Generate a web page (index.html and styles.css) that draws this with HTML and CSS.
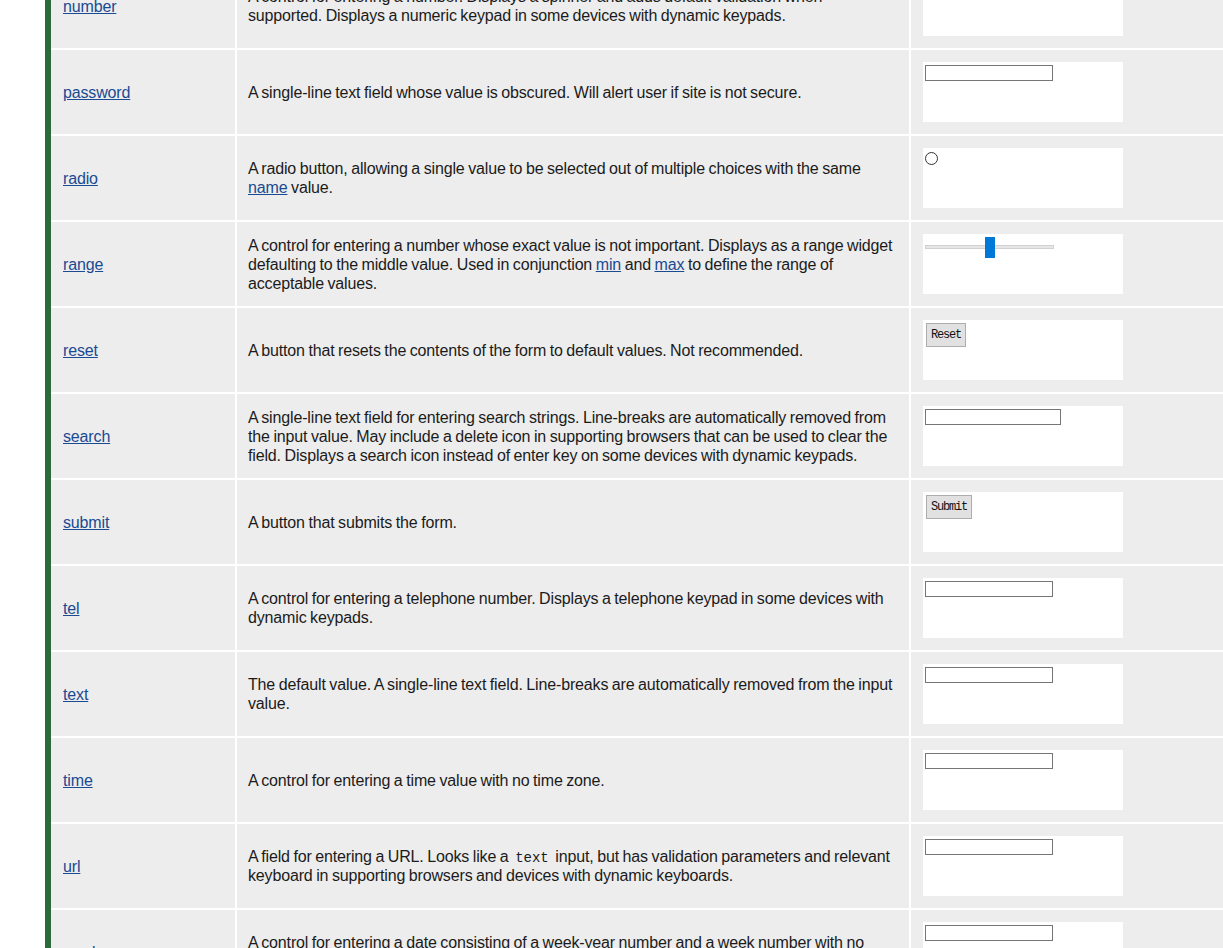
FILE: index.html
```html
<!DOCTYPE html>
<html lang="en">
<head>
    <meta charset="UTF-8">
    <meta name="viewport" content="width=device-width, initial-scale=1.0">
    <title>input types</title>
    <link rel="stylesheet" href="styles.css">
</head>
<body>
    <div class="table-wrap">
        <table class="types">
            <tbody>
                <tr>
                    <td class="type"><a href="#">number</a></td>
                    <td class="desc">A control for entering a number. Displays a spinner and adds default validation when supported. Displays a numeric keypad in some devices with dynamic keypads.</td>
                    <td class="demo"><div class="frame"><input type="text" class="field"></div></td>
                </tr>
                <tr>
                    <td class="type"><a href="#">password</a></td>
                    <td class="desc">A single-line text field whose value is obscured. Will alert user if site is not secure.</td>
                    <td class="demo"><div class="frame"><input type="password" class="field"></div></td>
                </tr>
                <tr>
                    <td class="type"><a href="#">radio</a></td>
                    <td class="desc">A radio button, allowing a single value to be selected out of multiple choices with the same <a href="#">name</a> value.</td>
                    <td class="demo"><div class="frame"><input type="radio" class="radio"></div></td>
                </tr>
                <tr>
                    <td class="type"><a href="#">range</a></td>
                    <td class="desc">A control for entering a number whose exact value is not important. Displays as a range widget defaulting to the middle value. Used in conjunction <a href="#">min</a> and <a href="#">max</a> to define the range of acceptable values.</td>
                    <td class="demo"><div class="frame frame-range"><input type="range" class="range"></div></td>
                </tr>
                <tr>
                    <td class="type"><a href="#">reset</a></td>
                    <td class="desc">A button that resets the contents of the form to default values. Not recommended.</td>
                    <td class="demo"><div class="frame frame-btn"><button type="button" class="btn">Reset</button></div></td>
                </tr>
                <tr>
                    <td class="type"><a href="#">search</a></td>
                    <td class="desc">A single-line text field for entering search strings. Line-breaks are automatically removed from the input value. May include a delete icon in supporting browsers that can be used to clear the field. Displays a search icon instead of enter key on some devices with dynamic keypads.</td>
                    <td class="demo"><div class="frame"><input type="search" class="field search"></div></td>
                </tr>
                <tr>
                    <td class="type"><a href="#">submit</a></td>
                    <td class="desc">A button that submits the form.</td>
                    <td class="demo"><div class="frame frame-btn"><button type="button" class="btn">Submit</button></div></td>
                </tr>
                <tr>
                    <td class="type"><a href="#">tel</a></td>
                    <td class="desc">A control for entering a telephone number. Displays a telephone keypad in some devices with dynamic keypads.</td>
                    <td class="demo"><div class="frame"><input type="tel" class="field"></div></td>
                </tr>
                <tr>
                    <td class="type"><a href="#">text</a></td>
                    <td class="desc">The default value. A single-line text field. Line-breaks are automatically removed from the input value.</td>
                    <td class="demo"><div class="frame"><input type="text" class="field"></div></td>
                </tr>
                <tr>
                    <td class="type"><a href="#">time</a></td>
                    <td class="desc">A control for entering a time value with no time zone.</td>
                    <td class="demo"><div class="frame"><input type="text" class="field"></div></td>
                </tr>
                <tr>
                    <td class="type"><a href="#">url</a></td>
                    <td class="desc">A field for entering a URL. Looks like a <code>text</code> input, but has validation parameters and relevant keyboard in supporting browsers and devices with dynamic keyboards.</td>
                    <td class="demo"><div class="frame"><input type="url" class="field"></div></td>
                </tr>
                <tr>
                    <td class="type"><a href="#">week</a></td>
                    <td class="desc">A control for entering a date consisting of a week-year number and a week number with no time zone.</td>
                    <td class="demo"><div class="frame"><input type="text" class="field"></div></td>
                </tr>
            </tbody>
        </table>
    </div>
</body>
</html>
```
FILE: styles.css
```css
html, body {
    overflow: hidden;
}
body {
    margin: 0;
    background-color: white;
    font-family: "Liberation Sans", Arial, sans-serif;
    font-size: 16px;
    line-height: 19px;
    letter-spacing: -0.15px;
    word-spacing: -0.7px;
    color: #1b1b1b;
}
.table-wrap {
    margin: -36px 0 0 45px;
    border-left: 6px solid #2a6a3b;
    width: 1300px;
}
.types {
    border-collapse: separate;
    border-spacing: 0;
}
.types td {
    background-color: #ededed;
    border-right: 2px solid white;
    border-bottom: 2px solid white;
    padding: 12px;
    vertical-align: middle;
}
.types td.type {
    width: 160px;
}
.types td.desc {
    width: 648px;
    padding-left: 11px;
    padding-right: 13px;
}
.types td.demo {
    width: 400px;
}
a {
    color: #1a4a92;
    text-decoration: underline;
}
code {
    font-family: "Liberation Mono", monospace;
    font-size: 14px;
    line-height: 1;
    letter-spacing: 0;
    padding: 0 3px;
}
.frame {
    box-sizing: border-box;
    width: 200px;
    height: 60px;
    padding: 3px 0 0 2px;
    background-color: white;
}
.frame-range {
    padding-top: 2px;
}
.frame-btn {
    padding: 3px 0 0 3px;
}
.field {
    -webkit-appearance: none;
    appearance: none;
    display: block;
    box-sizing: border-box;
    width: 128px;
    height: 16px;
    margin: 0;
    padding: 0;
    border: 1px solid #767676;
    border-radius: 0;
    background: white;
    outline: none;
}
.field.search {
    width: 136px;
}
.radio {
    -webkit-appearance: none;
    appearance: none;
    display: block;
    box-sizing: border-box;
    width: 13px;
    height: 13px;
    margin: 1px 0 0 0;
    border: 1px solid #333;
    border-radius: 50%;
    background: white;
}
.range {
    -webkit-appearance: none;
    appearance: none;
    display: block;
    width: 129px;
    height: 21px;
    margin: 0;
    padding: 0;
    background: transparent;
}
.range::-webkit-slider-runnable-track {
    height: 4px;
    box-sizing: border-box;
    background: #e6e6e6;
    border: 1px solid #d2d2d2;
}
.range::-webkit-slider-thumb {
    -webkit-appearance: none;
    width: 10px;
    height: 21px;
    margin-top: -9px;
    background: #0078d7;
    border: none;
    border-radius: 0;
}
.btn {
    display: block;
    margin: 0;
    padding: 0 4px;
    height: 24px;
    font-family: "Liberation Mono", monospace;
    font-size: 12px;
    letter-spacing: -1.2px;
    color: #111;
    background-color: #e1e1e1;
    border: 1px solid #adadad;
    border-radius: 0;
}
```
